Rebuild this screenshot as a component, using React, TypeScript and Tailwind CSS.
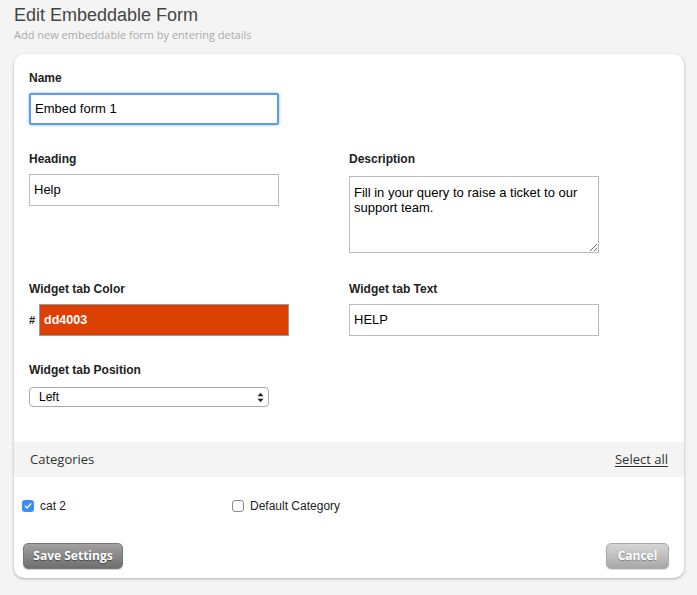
import React from "react";

function Label({ children }: { children: React.ReactNode }) {
  return (
    <div className="text-[12px] leading-[16px] font-bold text-[#222] font-['Liberation_Sans',Arial,sans-serif]">
      {children}
    </div>
  );
}

function Check({ checked }: { checked?: boolean }) {
  if (checked) {
    return (
      <span className="flex h-[12px] w-[12px] items-center justify-center rounded-[3px] bg-[#3a8ef5]">
        <svg width="8" height="8" viewBox="0 0 8 8">
          <path d="M1.3 4.2 L3.1 6 L6.7 1.8" fill="none" stroke="white" strokeWidth="1.3" strokeLinecap="round" strokeLinejoin="round" />
        </svg>
      </span>
    );
  }
  return <span className="block h-[12px] w-[12px] rounded-[3px] border border-[#8a8a8a] bg-white" />;
}

export default function App() {
  return (
    <div className="min-h-[595px] bg-[#f4f4f4] pl-[14px] pr-[13px] font-['Liberation_Sans',Arial,sans-serif]">
      <div className="pt-[4px] text-[18px] leading-[22px] text-[#444]">Edit Embeddable Form</div>
      <div className="mt-[2px] text-[11px] leading-[14px] text-[#aaa] font-['Open_Sans',sans-serif]">
        Add new embeddable form by entering details
      </div>

      <div className="mt-[12px] rounded-[10px] bg-white pt-[16px] pb-[9px] shadow-[0_1px_3px_rgba(0,0,0,0.3)]">
        <div className="px-[15px]">
          {/* Name */}
          <Label>Name</Label>
          <div className="mt-[7px] flex h-[32px] w-[250px] items-center rounded-[2px] border-2 border-[#5e9be3] px-[4px] text-[13px] text-black shadow-[0_0_3px_#8bb8f0]">
            Embed form 1
          </div>

          {/* Heading / Description */}
          <div className="mt-[26px] grid grid-cols-[320px_1fr]">
            <div>
              <Label>Heading</Label>
              <div className="mt-[7px] flex h-[32px] w-[250px] items-center border border-[#bbb] px-[4px] text-[13px] text-black">
                Help
              </div>
            </div>
            <div>
              <Label>Description</Label>
              <textarea
                readOnly
                defaultValue="Fill in your query to raise a ticket to our support team."
                className="mt-[9px] block h-[77px] w-[250px] resize-y border border-[#bbb] px-[4px] pt-[8px] text-[13px] leading-[15px] text-black outline-none font-['Liberation_Sans',Arial,sans-serif]"
              />
            </div>
          </div>

          {/* Color / Text */}
          <div className="mt-[28px] grid grid-cols-[320px_1fr]">
            <div>
              <Label>Widget tab Color</Label>
              <div className="mt-[7px] flex items-center">
                <span className="w-[10px] text-[11px] font-bold text-[#222]">#</span>
                <div className="flex h-[32px] w-[250px] items-center border border-[#999] bg-[#dd4003] px-[4px] text-[12.5px] font-bold text-white">
                  dd4003
                </div>
              </div>
            </div>
            <div>
              <Label>Widget tab Text</Label>
              <div className="mt-[7px] flex h-[32px] w-[250px] items-center border border-[#bbb] px-[4px] text-[13px] text-black">
                HELP
              </div>
            </div>
          </div>

          {/* Position */}
          <div className="mt-[26px]">
            <Label>Widget tab Position</Label>
            <div className="mt-[9px] flex h-[20px] w-[240px] items-center justify-between rounded-[4px] border border-[#aaa] bg-white pl-[9px] pr-[4px] text-[12px] text-black">
              <span>Left</span>
              <svg width="7" height="11" viewBox="0 0 7 11">
                <path d="M0.5 4.2 L3.5 0.8 L6.5 4.2 Z" fill="#222" />
                <path d="M0.5 6.8 L3.5 10.2 L6.5 6.8 Z" fill="#222" />
              </svg>
            </div>
          </div>
        </div>

        {/* Categories bar */}
        <div className="mt-[35px] flex h-[35px] items-center justify-between bg-[#f4f4f4] pl-[16px] pr-[16px] font-['Open_Sans',sans-serif] text-[13px] text-[#333]">
          <span>Categories</span>
          <span className="underline underline-offset-2">Select all</span>
        </div>

        {/* Category checkboxes */}
        <div className="mt-[20px] flex items-center pl-[8px] text-[12px] text-[#222]">
          <div className="flex w-[210px] items-center gap-[6px]">
            <Check checked />
            <span>cat 2</span>
          </div>
          <div className="flex items-center gap-[6px]">
            <Check />
            <span>Default Category</span>
          </div>
        </div>

        {/* Buttons */}
        <div className="mt-[28px] flex items-center justify-between pl-[9px] pr-[15px] font-['Open_Sans',sans-serif]">
          <button className="h-[26px] w-[100px] rounded-[5px] border border-[#777] bg-gradient-to-b from-[#a2a2a2] to-[#6e6e6e] text-[12px] font-bold text-white [text-shadow:0_1px_1px_rgba(0,0,0,0.45)] shadow-[0_1px_1px_rgba(0,0,0,0.2)]">
            Save Settings
          </button>
          <button className="h-[26px] w-[63px] rounded-[5px] border border-[#aaa] bg-gradient-to-b from-[#d6d6d6] to-[#a8a8a8] text-[12px] font-bold text-white [text-shadow:0_1px_1px_rgba(0,0,0,0.3)] shadow-[0_1px_1px_rgba(0,0,0,0.15)]">
            Cancel
          </button>
        </div>
      </div>
    </div>
  );
}
